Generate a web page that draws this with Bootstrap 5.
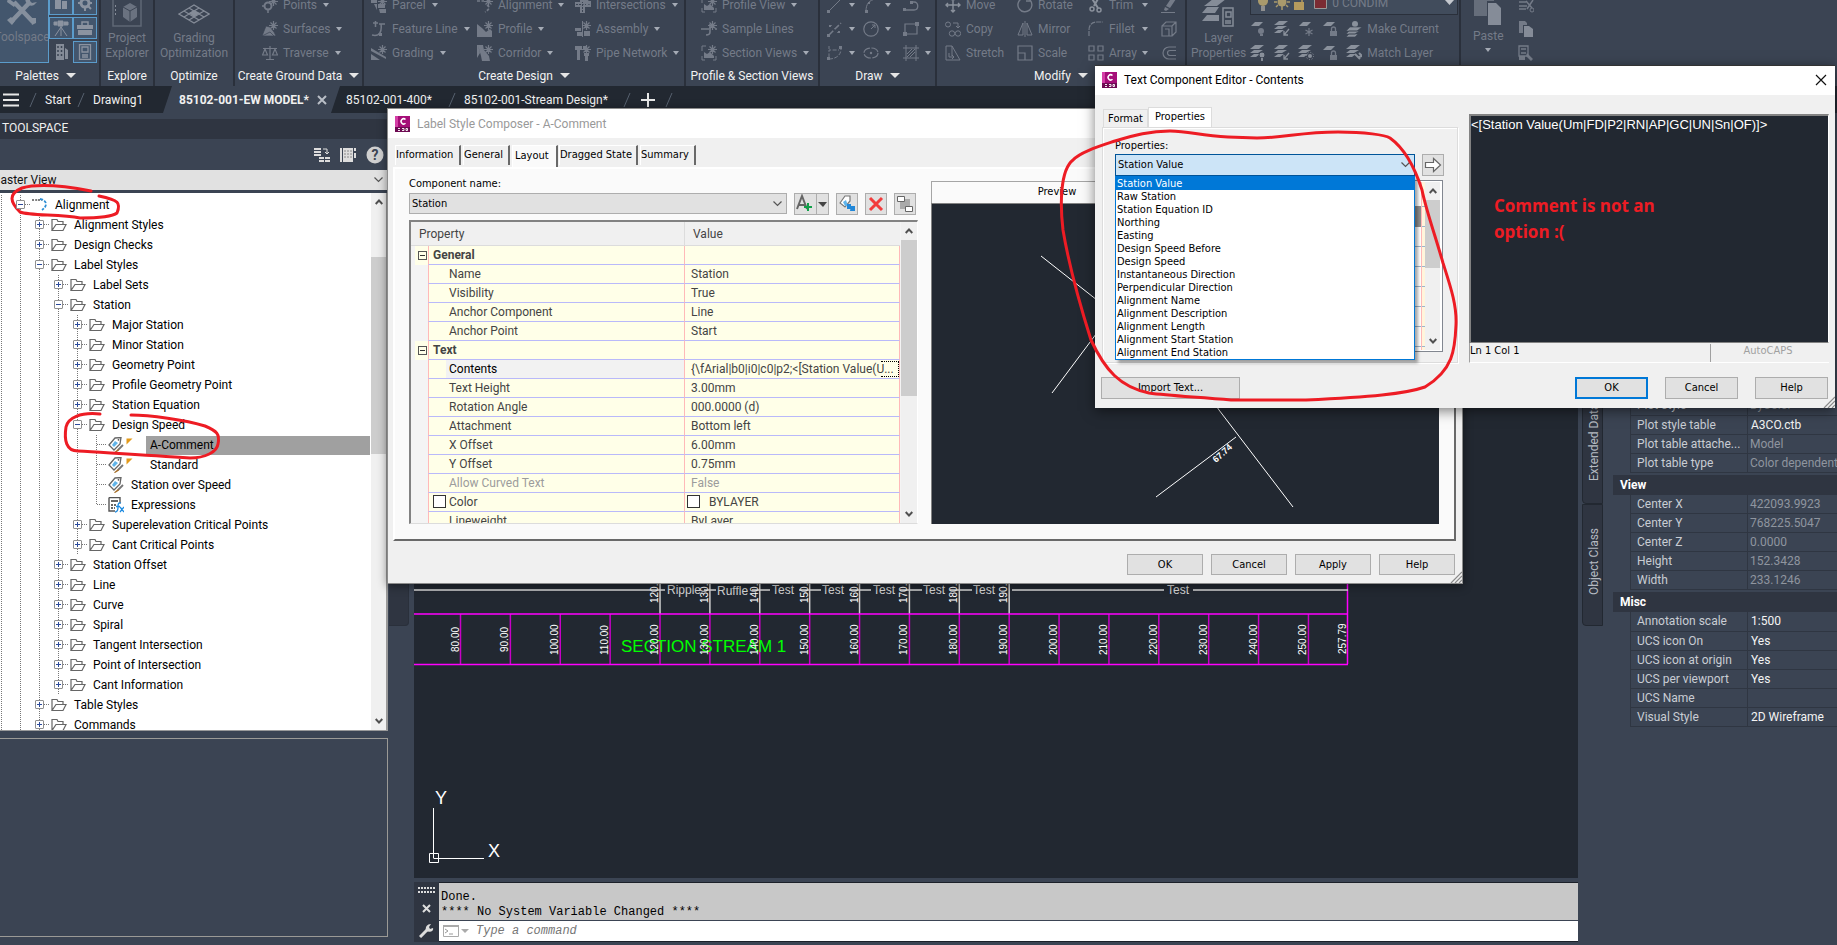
<!DOCTYPE html>
<html lang="en">
<head>
<meta charset="utf-8">
<meta name="viewport" content="width=device-width, initial-scale=1">
<title>Civil 3D - Label Style Composer</title>
<link href="https://cdn.jsdelivr.net/npm/bootstrap@5.3.0/dist/css/bootstrap.min.css" rel="stylesheet">
<style>
:root{--panel:#3b4453;--deep:#2f3541;--ink:#222831;--line:#2a303b;--dim:#747b88;--ui:Roboto,"Open Sans",sans-serif;--dlg:"DejaVu Sans Condensed","Noto Sans",sans-serif}
body{height:100vh;overflow:hidden;background:var(--panel);font:12px/16px var(--ui);color:#f0f0f0;display:flex;flex-direction:column;position:relative}
button,select,input,textarea{font:inherit;color:inherit;border:0;border-radius:0;background:none;padding:0;margin:0}
svg{flex:none;display:block}
.ic{width:16px;height:16px}
/* ribbon */
.ribbon{height:86px;overflow:hidden;color:var(--dim)}
.rpanel{border-right:2px solid var(--line);display:flex;flex-direction:column;flex:none}
.rpanel:last-child{border:0;flex:1}
.rbody{height:65px;overflow:hidden;display:flex;align-items:flex-end}
.rtitle{height:21px;color:#f2f2f2;display:flex;align-items:center;justify-content:center;gap:7px;white-space:nowrap}
.car{width:0;height:0;border:3px solid transparent;border-top:4px solid #a5abb5;border-bottom:0;flex:none}
.rtitle .car{border-width:5px 5px 0;border-top-color:#e6e6e6}
.rgrid{display:grid;grid-auto-rows:24px}
.rgrid button{display:flex;align-items:center;gap:5px;white-space:nowrap;text-align:left}
.rgrid .car{margin-left:1px}
.g1{margin-left:27px}
.g3{margin-left:7px;grid-template-columns:106px 98px 100px}
.g4{margin-left:15px}
.g5{margin-left:7px;grid-template-columns:36px 40px 32px}
.g6{margin-left:8px;grid-template-columns:72px 71px 73px 22px}
.g6 .car{margin-left:auto;margin-right:13px}
.glay{grid-template-columns:24px 24px 24px 24px auto}
.big{height:64px;display:flex;flex-direction:column;align-items:center;justify-content:flex-end;line-height:15px;padding-bottom:4px;gap:4px;flex:none}
.tsp{width:53px;height:63px;margin-left:-4px;align-self:flex-start;background:#43566d;border:1px solid #5b9ccb;border-width:0 1px 1px 0;padding-bottom:17px;overflow:hidden}
.tog{display:grid;grid-template-columns:24px 24px;grid-auto-rows:22px;gap:2px 0;padding-bottom:2px}
.tog button{display:flex;align-items:center;justify-content:center}
.tog .on{background:#43566d;border:1px solid #5b9ccb}
.laysel{width:208px;height:24px;background:#414c5c;border:1px solid var(--line);display:flex;align-items:center;gap:4px;padding:0 3px 0 5px;margin-bottom:2px}
.laysel select{flex:1;appearance:none}
/* drawing tabs */
.docs{height:27px;background:var(--ink);display:flex;align-items:stretch;flex:none}
.docs button{padding:1px 6px 0;white-space:nowrap;text-align:left;flex:none}
.docs .sl{width:12px;flex:none}
.docs .dactive{background:var(--panel);clip-path:polygon(9px 0,100% 0,calc(100% - 9px) 100%,0 100%);width:177px;padding-left:16px;font-weight:700;display:flex;align-items:center;gap:8px}
/* toolspace */
.space{width:388px;flex:none;display:flex;flex-direction:column;padding:6px 0 8px}
.tshead{height:20px;background:var(--deep);padding:1px 2px}
.tsbar{height:31px;display:flex;align-items:center;justify-content:flex-end;gap:10px;padding-right:4px}
.mview{position:relative;height:20px;margin-bottom:3px}
.mview select{appearance:none;width:100%;height:20px;background:#e1e1e1;color:#111;text-indent:-10px}
.chev{position:absolute;right:5px;top:50%;margin-top:-3px;pointer-events:none}
.treebox{flex:1;min-height:0;background:#fff;color:#000;display:flex;overflow:hidden;border-right:2px solid #9a9a9a;border-bottom:1px solid #9a9a9a}
.tree{flex:1;list-style:none;margin:2px 1px 0 -8px;padding:0;min-width:0}
.tree li{height:20px;display:flex;align-items:center}
.gd{width:19px;height:20px;flex:none;position:relative;background:repeating-linear-gradient(#777 0 1px,transparent 1px 2px) 9px 0/1px 100% no-repeat}
.gd.nd{background-size:1px 10px}
.gd.hz::after{content:"";position:absolute;left:10px;top:9px;width:9px;height:1px;background:repeating-linear-gradient(90deg,#777 0 1px,transparent 1px 2px)}
.gd button{position:absolute;left:5px;top:5px;width:9px;height:9px;border:1px solid #8f8f8f;background:linear-gradient(#2b4a9b,#2b4a9b) center/5px 1px no-repeat,#fff;z-index:1;border-radius:1px}
.gd button.pl{background:linear-gradient(#2b4a9b,#2b4a9b) center/5px 1px no-repeat,linear-gradient(#2b4a9b,#2b4a9b) center/1px 5px no-repeat,#fff}
.tree .ti{margin-left:2px}
.tree .tx{margin-left:7px;white-space:nowrap}
.tree .sel{flex:1;background:#a0a0a0;height:19px;line-height:19px;margin-left:3px;padding-left:4px}
.sb{width:15px;background:#f0f0f0;flex:none;display:flex;flex-direction:column;align-items:center}
.sb i{display:block;width:100%;background:#cdcdcd}
.sb svg{margin:6px 0}
.tpre{height:199px;margin-top:7px;border:1px solid #9b9a96;border-left:0;flex:none}
/* drawing area */
.gut{width:26px;flex:none;padding-left:1px}
.gut div{width:20px;height:513px;background:var(--deep);border:1px solid var(--line);border-left:0;border-radius:0 0 4px 0}
.draw{flex:1;min-width:0;display:flex;flex-direction:column}
.canvas{flex:1;min-height:0;background:var(--ink);overflow:hidden}
.canvas text,.pv text{font-family:"Liberation Sans",Arial,sans-serif}
.cmd{height:60px;margin:4px 0 3px;display:flex;flex:none}
.cgrip{width:25px;background:var(--deep);display:flex;flex-direction:column;align-items:center;justify-content:space-between;padding:5px 0 4px;flex:none}
.clog{height:38px;background:#c8c8c8;color:#000;padding:7px 2px 1px;font:12px/15px "Liberation Mono",monospace;border-top:1px solid #1b2029}
.cin{height:21px;margin-top:1px;background:#fff;display:flex;align-items:center;padding-left:4px;border-bottom:1px solid #1b2029}
.cin input{flex:1;margin-left:7px;font:italic 12px "Liberation Mono",monospace;color:#222;outline:0}
.cin input::placeholder{color:#777;opacity:1}
/* properties */
.props{width:259px;flex:none;display:flex;overflow:hidden}
.vtabs{padding:271px 10px 0 4px;display:flex;flex-direction:column}
.vtabs button{width:21px;height:120px;line-height:18px;writing-mode:vertical-rl;transform:rotate(180deg);background:var(--deep);border:1px solid #222831;color:#b5bac2;border-radius:0 4px 0 0;text-align:left;padding:22px 2px 0 0}
.vtabs button+button{height:122px;padding-top:30px}
.pg{flex:1;padding-top:283px;min-width:0;overflow:hidden}
.pg table{margin:0 0 2px 17px;width:240px;table-layout:fixed;border-collapse:collapse;color:#c9cdd3}
.pg td{height:19px;padding:0 0 0 6px;border:1px solid #2f3642;border-width:0 0 1px 1px;line-height:18px;white-space:nowrap;overflow:hidden}
.pg td:first-child{width:117px}
.pg td.w{color:#f4f4f4;padding-left:3px}
.pg td.d{color:#8f959f;padding-left:2px}
.pg h2{margin:0;height:20px;font:700 12px/20px var(--ui);background:var(--deep);padding-left:7px;color:#fff}
/* dialogs */
.dlgw{position:absolute;background:#f0f0f0;color:#000;font:11px/14px var(--dlg);display:flex;flex-direction:column}
.dtitle{height:29px;background:#fff;display:flex;align-items:center;gap:7px;padding:0 8px 0 7px;font:12px/16px var(--ui);flex:none}
.dtitle span{flex:1}
.b3{height:21px;background:#e1e1e1;border:1px solid #adadad;text-align:center;flex:none}
.ib{width:22px;height:22px;background:#e1e1e1;border:1px solid #adadad;display:flex;align-items:center;justify-content:center;flex:none}
.lsc{left:387px;top:108px;width:1076px;height:476px;border:1px solid #8c8c8c;box-shadow:0 2px 9px rgba(0,0,0,.45)}
.lsc .dtitle{color:#999}
.ltabs{display:flex;align-items:flex-end;padding:7px 0 0 7px;gap:2px;height:29px;flex:none}
.ltabs button{height:20px;border-top:1px solid #fff;border-left:1px solid #fff;border-right:2px solid #696969;margin-bottom:2px;white-space:nowrap;padding:0 0 1px;text-align:left}
.ltabs .act{height:22px;margin-bottom:0;padding-left:2px;background:#fafafa}
.lpane{margin:0 6px 0 5px;height:374px;background:#fafafa;border:2px solid #fff;border-right:2px solid #696969;border-bottom:2px solid #696969;display:flex;padding:8px 14px 16px 14px;gap:13px}
.cbx{position:relative}
.cbx select{appearance:none;width:100%;height:21px;background:#e1e1e1;border:1px solid #adadad;padding-left:2px;text-align:left}
.lfoot{display:flex;justify-content:flex-end;gap:8px;padding:13px 7px 0 0}
.lfoot .b3{width:76px}
.grid{width:509px;height:304px;border:2px solid #828282;border-right:1px solid #fff;border-bottom:1px solid #dcdcdc;display:flex;background:#f4f4f4;overflow:hidden;margin-top:5px}
.grid table{width:489px;table-layout:fixed;border-collapse:separate;border-spacing:0;font:12px/16px var(--ui);color:#444;flex:none;align-self:flex-start}
.grid th{height:24px;background:#f0f0f0;font-weight:400;border-bottom:1px solid #dcdcdc;padding:0 0 0 8px}
.grid th+th{border-left:1px solid #dcdcdc}
.grid td{height:19px;line-height:17px;background:#ffffe8;border-bottom:1px solid #b9b9fa;white-space:nowrap;padding:0;overflow:hidden}
.grid td.gt{width:17px;background:#f4f4f4;border:0}
.grid td.nm{border-left:1px solid #ffb9b9;padding-left:20px}
.grid td.vl{border-left:1px solid #ffb9b9;border-right:1px solid #ffb9b9;padding-left:6px}
.grid tr.cat td.gt{background:linear-gradient(90deg,#f4f4f4 4px,#ffffe8 4px)}
.grid tr.cat td.nm{font-weight:700;padding-left:4px}
.ebox{display:block;width:9px;height:9px;border:1px solid #555;background:linear-gradient(#333,#333) center/5px 1px no-repeat;margin:0 1px 0 auto}
.grid tr.off{color:#9c9c9c}
.grid tr.cur td.nm{background:linear-gradient(90deg,#ffffe8 17px,#f2f2f2 17px);color:#000}
.grid tr.cur td.vl>div{position:relative}
.dotb{position:absolute;right:0;top:0;width:18px;height:16px;border:1px dotted #000;border-left:0}
.sw{display:inline-block;width:13px;height:13px;border:1px solid #333;background:#fff;vertical-align:-2px}
.pvh{width:252px;height:22px;border:1px solid #a5a5a5;border-bottom:0;background:#fafafa;text-align:center;line-height:20px}
.pv{width:508px;height:321px;background:var(--ink);border-left:1px solid #828282;border-top:1px solid #828282;overflow:hidden}
.tce{left:1095px;top:65px;width:740px;height:343px;border-top:1px solid #333;box-shadow:0 3px 12px rgba(0,0,0,.5)}
.tce .dtitle{padding-bottom:1px}
.ftabs{display:flex;align-items:flex-end;padding-left:8px;height:32px;flex:none}
.ftabs button{height:18px;width:45px;border:1px solid #dcdcdc;border-bottom:0;background:#f0f0f0}
.ftabs .act{height:21px;width:64px;background:#fff;margin-bottom:-1px;padding-bottom:2px}
.fpane{width:356px;height:236px;margin-left:7px;border:1px solid #dcdcdc;padding:11px 12px 0;position:relative;box-shadow:inset 1px 1px 0 #fff,1px 1px 0 #fff}
.tce .cbx select{background:#cce4f7;border-color:#005499;height:22px}
.ftab{height:172px;border:1px solid #828790;background:#fff;margin-top:4px;width:328px;display:flex;justify-content:flex-end;padding:1px 2px}
.rl{width:30px;background:linear-gradient(#8f8f8f,#8f8f8f) 0 24px/26px 21px no-repeat,linear-gradient(#ffb9b9,#ffb9b9) 26px 0/1px 100% no-repeat,repeating-linear-gradient(transparent 0 19px,#9db6cc 19px 20px) 0 5px,linear-gradient(90deg,#fff 27px,#fff5dc 27px)}
.drop{position:absolute;left:12px;top:48px;width:300px;height:184px;background:#fff;border:1px solid #0078d7;box-shadow:3px 3px 3px rgba(0,0,0,.35);list-style:none;margin:0;padding:0;line-height:13px}
.drop li{padding-left:1px;height:13px}
.drop li:first-child{background:#0078d7;color:#fff}
.ed{width:360px;margin:-13px 0 0 11px}
.ed textarea{display:block;width:360px;height:229px;padding-top:1px;background:var(--ink);color:#fff;resize:none;outline:0;border:2px solid #828282;border-right:1px solid #fff;border-bottom:1px solid #828282;font:13px/16px "Liberation Sans",Arial,sans-serif;overflow:hidden}
.stat{display:flex;height:20px;border-bottom:1px solid #fff;border-left:1px solid #a0a0a0;padding-top:1px}
.stat div:first-child{flex:1}
.stat div:last-child{width:119px;border-left:1px solid #a0a0a0;padding-right:4px;text-align:center;color:#a0a0a0}
.ffoot{display:flex;gap:17px;padding:0 7px 0 6px;margin-top:14px}
.ffoot .b3{width:73px;height:22px}
.ffoot .imp{width:139px;margin-right:auto}
.ffoot .ok{border:2px solid #0078d7}
.grip{position:absolute;right:0;bottom:0}
.ann{position:absolute;left:0;top:0;pointer-events:none}
.note{position:absolute;left:1494px;top:193px;font:700 17px/26px "Open Sans","Noto Sans",sans-serif;color:#ed1c24;margin:0}
</style>
</head>
<body>

<svg width="0" height="0" class="position-absolute" aria-hidden="true">
<defs>
<symbol id="star" viewBox="0 0 16 16"><path d="M11.500 0v9M7 4.500h9M8.500 1.500l6 6M14.500 1.500l-6 6" stroke="#747b88" stroke-width="1.200"/></symbol>
<symbol id="i-pt" viewBox="0 0 16 16"><circle cx="6" cy="9" r="3.500" fill="none" stroke="#747b88" stroke-width="2"/><path d="M6 12v4M0 9h3"  stroke="#747b88" stroke-width="1.500"/><use href="#star"/></symbol>
<symbol id="i-surf" viewBox="0 0 16 16"><path d="M0 15 4 5l4 1 4 5 2 4zM0 15l8-4 4 4" fill="#747b88" stroke="#3b4453" stroke-width=".7"/><use href="#star"/></symbol>
<symbol id="i-trav" viewBox="0 0 16 16" ><path d="M8 1v13M4 14.500h8M1 3.500h14M3 4l-2.500 6h5zM13 4l-2.500 6h5z" fill="none" stroke="#747b88" stroke-width="1.200"/></symbol>
<symbol id="i-parc" viewBox="0 0 16 16"><path d="M0 1h6v5H0zM7 7h7v4H7zM3 7h3v6zM8 12h7v4H9z" fill="#747b88"/><use href="#star"/></symbol>
<symbol id="i-feat" viewBox="0 0 16 16"><path d="M1 14c8 2 10-4 9-11M8 3h6M2 2h5M4.500 0v6" fill="none" stroke="#747b88" stroke-width="1.500"/><path d="M8 12h3v3H8z" fill="#747b88"/></symbol>
<symbol id="i-grade" viewBox="0 0 16 16"><path d="M0 3l15 9v2L0 6zM0 9l9 6H0z" fill="#747b88"/><use href="#star"/></symbol>
<symbol id="i-align" viewBox="0 0 16 16"><path d="M0 4h7M10 8c3 2 3 4-2 7" fill="none" stroke="#747b88" stroke-width="1.600" stroke-dasharray="3 1.500"/><use href="#star"/></symbol>
<symbol id="i-prof" viewBox="0 0 16 16"><path d="M0 3l5 4 4 4 4-3 2 2v6H0zM1 0v4" fill="#747b88"/><use href="#star"/></symbol>
<symbol id="i-corr" viewBox="0 0 16 16"><path d="M1 0h5l1 5 5 6 1 5H5l-1-5zM0 0h1l2 8-3 5z" fill="#747b88"/><use href="#star"/></symbol>
<symbol id="i-int" viewBox="0 0 16 16"><path d="M5 0h5v5h6v5h-6v6H5v-6H0V5h5z" fill="#747b88"/><path d="M7.500 1v14M1 7.500h14" stroke="#3b4453" stroke-dasharray="2 1"/><use href="#star"/></symbol>
<symbol id="i-asm" viewBox="0 0 16 16"><path d="M0 7h6v3H0zM2 11h5v4H2zM9 10h6v5H9zM7 0h1v16H7z" fill="#747b88"/><use href="#star"/></symbol>
<symbol id="i-pipe" viewBox="0 0 16 16"><path d="M0 1h7v4H5v10H2V5H0zM8 1h3v3H8zM9 8h5v3h-1v5h-3v-5H9z" fill="#747b88"/><use href="#star"/></symbol>
<symbol id="i-pv" viewBox="0 0 16 16"><path d="M1 6V1h4M15 11v4h-3M1 11v4h3" fill="none" stroke="#747b88"/><path d="M3 13V7l3 2 3-2 4 4v2z" fill="#747b88"/><use href="#star"/></symbol>
<symbol id="i-sl" viewBox="0 0 16 16"><path d="M0 8h8M14 8h2M9 3v8c0 3-2 3-4 3" fill="none" stroke="#747b88" stroke-width="1.600"/><use href="#star"/></symbol>
<symbol id="i-line" viewBox="0 0 16 16"><path d="M2 14 14 2" stroke="#747b88"/><path d="M0 13h3v3H0zM13 0h3v3h-3z" fill="#747b88"/></symbol>
<symbol id="i-dash" viewBox="0 0 16 16"><path d="M2 14 14 2M4 4v1M8 7v1M11 11v1" stroke="#747b88" stroke-width="1.500" stroke-dasharray="6 2"/><path d="M2 4h2v2H2zM11 10h2v2h-2zM0 13h3v3H0z" fill="#747b88"/></symbol>
<symbol id="i-arc1" viewBox="0 0 16 16"><path d="M2 1v3M14 1v3c0 6-5 10-12 10V5h10" fill="none" stroke="#747b88" stroke-dasharray="4 1.500"/><path d="M0 12h3v3H0zM12 1h3v3h-3z" fill="#747b88"/></symbol>
<symbol id="i-arc" viewBox="0 0 16 16"><path d="M3 14C3 7 6 3 13 2" fill="none" stroke="#747b88"/><path d="M2 13h3v3H2zM12 0h3v3h-3zM5 5h2v2H5z" fill="#747b88"/></symbol>
<symbol id="i-circ" viewBox="0 0 16 16"><circle cx="8" cy="8" r="7.200" fill="none" stroke="#747b88" stroke-width="1.200"/><path d="M8 8l4-4M9 4h3v3" fill="none" stroke="#747b88"/></symbol>
<symbol id="i-ell" viewBox="0 0 16 16"><ellipse cx="8" cy="8" rx="7" ry="5" fill="none" stroke="#747b88" stroke-width="1.200" stroke-dasharray="8 1.500"/><circle cx="8" cy="8" r="1.200" fill="#747b88"/></symbol>
<symbol id="i-pl" viewBox="0 0 16 16"><path d="M1 13h10c5 0 5-8 0-8H9" fill="none" stroke="#747b88" stroke-width="1.300"/><path d="M0 11h3v3H0zM7 4h3v3H7z" fill="#747b88"/></symbol>
<symbol id="i-rect" viewBox="0 0 16 16"><path d="M2 3h12v10H2z" fill="none" stroke="#747b88" stroke-width="1.200"/><path d="M0 11h4v4H0zM12 1h4v4h-4z" fill="#747b88"/></symbol>
<symbol id="i-hat" viewBox="0 0 16 16"><path d="M3 0v16M13 0v16M0 3h16M0 13h16M4 9l5-5M4 12l8-8M7 12l5-5" fill="none" stroke="#747b88"/></symbol>
<symbol id="i-move" viewBox="0 0 16 16"><path d="M8 1v14M1 8h14M6 3l2-2 2 2M6 13l2 2 2-2M3 6 1 8l2 2M13 6l2 2-2 2" fill="none" stroke="#8a919c" stroke-width="1.400"/></symbol>
<symbol id="i-copy" viewBox="0 0 16 16"><circle cx="3" cy="3.500" r="2.500" fill="none" stroke="#747b88"/><circle cx="7" cy="12.500" r="2.700" fill="none" stroke="#747b88"/><circle cx="13" cy="12.500" r="2.700" fill="none" stroke="#747b88"/><path d="M8 2h5v5M11 5l2 2 2-2" fill="none" stroke="#747b88"/></symbol>
<symbol id="i-str" viewBox="0 0 16 16"><path d="M1 1h6l8 14H1zM7 1v10M4 8v4h5M7 10l2 2-2 2" fill="none" stroke="#747b88"/></symbol>
<symbol id="i-rot" viewBox="0 0 16 16"><path d="M4 2a7 7 0 1 0 9 1M13 0v4H9" fill="none" stroke="#747b88" stroke-width="1.400"/></symbol>
<symbol id="i-mir" viewBox="0 0 16 16"><path d="M6 2v12H1zM10 2v12h5zM8 0v16" fill="none" stroke="#747b88"/></symbol>
<symbol id="i-scl" viewBox="0 0 16 16"><path d="M1 1h14v14H1zM1 8h7v7" fill="none" stroke="#747b88" stroke-width="1.200"/></symbol>
<symbol id="i-trim" viewBox="0 0 16 16"><path d="M3 0l7 11M11 0 6 9" stroke="#8a919c" stroke-width="2"/><circle cx="4" cy="12" r="2" fill="none" stroke="#8a919c" stroke-width="1.500"/><circle cx="11" cy="13" r="2" fill="none" stroke="#8a919c" stroke-width="1.500"/></symbol>
<symbol id="i-fil" viewBox="0 0 16 16"><path d="M1 15V9c0-5 3-8 8-8h6" fill="none" stroke="#747b88" stroke-width="1.200" stroke-dasharray="5 1"/></symbol>
<symbol id="i-arr" viewBox="0 0 16 16"><path d="M1 1h5v5H1zM10 1h5v5h-5zM1 10h5v5H1zM10 10h5v5h-5z" fill="none" stroke="#747b88" stroke-width="1.200"/></symbol>
<symbol id="i-ers" viewBox="0 0 16 16"><path d="M5 9 11 0l4 2-6 9zM4 10l4 2-3 2-2-1z" fill="#747b88"/><path d="M0 15.500h14" stroke="#747b88"/></symbol>
<symbol id="i-cube" viewBox="0 0 16 16"><path d="M1 5h10v10H1zM1 5l4-4h10v10l-4 4M11 5l4-4M4 8h4v7" fill="none" stroke="#747b88" stroke-width="1.200"/></symbol>
<symbol id="i-off" viewBox="0 0 16 16"><path d="M15 2H8a6 6 0 0 0 0 12h7M15 5.500H9a2.500 2.500 0 0 0 0 5h6" fill="none" stroke="#747b88" stroke-width="1.200"/></symbol>
<symbol id="i-ly1" viewBox="0 0 16 16"><path d="M5 1h8L9 5H1z" fill="#8a919c"/><circle cx="11" cy="10" r="3" fill="#747b88"/><path d="M10 13h3v2h-3z" fill="#747b88"/></symbol>
<symbol id="i-ly2" viewBox="0 0 16 16"><path d="M5 0h9L9 4H0zM4 5h9L8 8H0zM4 9h6l-4 3H0z" fill="#8a919c"/><path d="M15 8l-5 6M10 10v4h4" stroke="#8a919c" fill="none" stroke-width="1.300"/></symbol>
<symbol id="i-ly3" viewBox="0 0 16 16"><path d="M5 1h8L9 5H1z" fill="#8a919c"/><path d="M11 7v8M7.500 9l7 4M14.500 9l-7 4" stroke="#747b88" stroke-width="1.200"/></symbol>
<symbol id="i-ly4" viewBox="0 0 16 16"><path d="M5 1h8L9 5H1z" fill="#8a919c"/><path d="M8 10h7v5H8z" fill="#747b88"/><path d="M9.500 10V8a2 2 0 0 1 4 0v2" fill="none" stroke="#747b88" stroke-width="1.300"/></symbol>
<symbol id="i-ly5" viewBox="0 0 16 16"><circle cx="9" cy="3" r="3" fill="#8a919c"/><path d="M4 6h12l-5 4H0zM3 10h10l-4 3H0zM3 13h9l-3 3H0z" fill="#8a919c" stroke="#3b4453" stroke-width=".6"/></symbol>
<symbol id="i-ly6" viewBox="0 0 16 16"><path d="M5 0h9L9 4H0zM4 5h9L8 8H0zM4 9h6l-4 3H0z" fill="#8a919c"/><circle cx="12" cy="10" r="3" fill="#8a919c" stroke="#3b4453"/><path d="M11 13h2v3h-2z" fill="#8a919c"/></symbol>
<symbol id="i-ly7" viewBox="0 0 16 16"><path d="M5 0h9L9 4H0zM4 5h9L8 8H0zM4 9h6l-4 3H0z" fill="#8a919c"/><circle cx="12" cy="11" r="2" fill="#8a919c"/><circle cx="12" cy="11" r="3.600" fill="none" stroke="#8a919c" stroke-dasharray="1 1.800"/></symbol>
<symbol id="i-ly8" viewBox="0 0 16 16"><path d="M5 0h9L9 4H0zM4 5h9L8 8H0zM4 9h6l-4 3H0z" fill="#8a919c"/><path d="M9 9l5 5M13 8l3 3-3 1" stroke="#8a919c" stroke-width="2" fill="none"/></symbol>
<symbol id="i-cut" viewBox="0 0 16 16"><path d="M1 2h8M1 5h7M1 9h8M1 12h7" stroke="#747b88" stroke-width="1.500"/><path d="M15 3 9 12M8 4l6 7" stroke="#747b88" stroke-width="1.500"/><circle cx="14" cy="13" r="2" fill="none" stroke="#747b88"/></symbol>
<symbol id="i-cpy" viewBox="0 0 16 16"><path d="M1 0h6l2 2v2H5v8H1z" fill="#747b88"/><path d="M6 5h5l4 3v8H6z" fill="#858c98"/></symbol>
<symbol id="i-pst" viewBox="0 0 16 16"><path d="M1 1h9v10H1zM3 4h5M3 8h5" fill="none" stroke="#747b88" stroke-width="1.300"/><path d="M1 11h6v4H1zM9 8l6 6-2 2-5-5z" fill="#747b88"/></symbol>
<symbol id="fold" viewBox="0 0 16 14"><path d="M1 12.500V1.500h5l1 2h5v3M1 12.500l4-6h10l-3 6z" fill="#fff" stroke="#666" stroke-width="1.200"/></symbol>
<symbol id="aln" viewBox="0 0 16 14"><path d="M0 2h6M6 2h4" stroke="#555" stroke-width="1.500" stroke-dasharray="2 1.200" fill="none"/><path d="M8 1c7 1 8 7 2 11" fill="none" stroke="#2a8dd4" stroke-width="1.800" stroke-dasharray="3 1.500"/></symbol>
<symbol id="tag" viewBox="0 0 16 16"><path d="M1 8 7 1l6-.500L12 7l-6 6z" fill="#fff" stroke="#666" stroke-width="1.300"/><path d="M4 8l3-4 3 2-4 4z" fill="#5fb4ea"/><circle cx="10.500" cy="2.800" r=".9" fill="#555"/><path d="M15 8l-5 5" stroke="#777" stroke-width="1.800"/><path d="M10 12l1 1.500L7 16l-1-.500z" fill="#a46a22"/></symbol>
<symbol id="expr" viewBox="0 0 16 16"><path d="M1 .500h11v6M1 .500V14h6" fill="none" stroke="#555" stroke-width="1.400"/><path d="M3 3h7v2H3zM3 7h2v2H3zM6 7h2v2H6zM3 10h2v2H3zM6 10h1v2H6z" fill="#666"/><path d="M13 6c-3-1-3 2-3 4s0 5-3 5M8 9.500h4M12 10l4 5M16 10l-4 5" fill="none" stroke="#1c8ae0" stroke-width="1.300"/></symbol>
<symbol id="c3d" viewBox="0 0 15 16"><path d="M0 0h15v16H0z" fill="#a50e78"/><path d="M0 0h3v11H0z" fill="#d43fa6"/><path d="M0 11h15v5H0z" fill="#6d0a52"/><path d="M10.500 3.500A2.600 2.600 0 1 0 10.500 7.300" fill="none" stroke="#fff" stroke-width="1.500"/><path d="M3 12.500h2M3 14.500h2M7 12.500h2v2H7M11 12.500h1.500v2H11z" stroke="#fff" fill="none" stroke-width=".9"/></symbol>
<symbol id="dn" viewBox="0 0 9 6"><path d="M.5.500 4.500 4.500 8.500.500" fill="none" stroke="#555" stroke-width="1.200"/></symbol>
<symbol id="sup" viewBox="0 0 8 6"><path d="M.7 5 4 1.500 7.300 5" fill="none" stroke="#505050" stroke-width="1.900"/></symbol>
<symbol id="sdn" viewBox="0 0 8 6"><path d="M.7 1 4 4.500 7.300 1" fill="none" stroke="#505050" stroke-width="1.900"/></symbol>
<symbol id="rs" viewBox="0 0 12 12"><path d="M1 12 12 1M5 12l7-7M9 12l3-3" stroke="#8a8a8a" stroke-width="1.200"/></symbol>
</defs>
</svg>

<header class="ribbon d-flex flex-shrink-0">
  <section class="rpanel" style="width:101px">
    <div class="rbody">
      <button class="big tsp"><svg width="32" height="32" viewBox="0 0 32 32"><path d="M5 28 24 8M27 28 8 8" stroke="#858f9d" stroke-width="4.500"/><path d="M20 3a6 6 0 0 0 8 8l3-3-5 1-2-2 1-5zM2 4l8 6-2 3-7-5zM1 26l5 5 3-4-4-4zM24 24l6 0 0 5-4 2z" fill="#858f9d"/></svg><span>Toolspace</span></button>
      <div class="tog">
        <button class="on" aria-label="Sheets"><svg class="ic"><path d="M2 2h6v11H2zM9 5h5v8H9z" fill="#8b93a0"/></svg></button>
        <button class="on" aria-label="Settings"><svg class="ic"><circle cx="8" cy="7" r="4" fill="none" stroke="#8b93a0" stroke-width="3"/><path d="M8 0v3M8 11v4M1 7h3M12 7h3M3 2l2 2M11 10l3 3" stroke="#8b93a0" stroke-width="2"/></svg></button>
        <button class="on" aria-label="Survey"><svg class="ic"><path d="M1 2h3v3H1zM5 1h5v5H5zM11 2h4v3h-4zM8 6v10M8 7l-6 9M8 7l6 9" fill="#8b93a0" stroke="#8b93a0"/></svg></button>
        <button class="on" aria-label="Toolbox"><svg class="ic"><path d="M0 5h16v4H0zM1 10h14v5H1z" fill="#8b93a0"/><path d="M5 5V2h6v3" fill="none" stroke="#8b93a0" stroke-width="1.500"/></svg></button>
        <button aria-label="Building"><svg class="ic"><path d="M3 0h8v16H3zM12 4l3 2v9h-3z" fill="#858c98"/><path d="M5 2v12M8.500 2v12" stroke="#3b4453" stroke-width="1.500" stroke-dasharray="2 2"/></svg></button>
        <button class="on" aria-label="Properties"><svg class="ic"><path d="M2.500.500h11v15h-11zM5 3h6v5H5zM5 11h6M5 13h6" fill="none" stroke="#8b93a0" stroke-width="1.300"/></svg></button>
      </div>
    </div>
    <div class="rtitle pe-2">Palettes <i class="car"></i></div>
  </section>
  <section class="rpanel" style="width:54px">
    <div class="rbody justify-content-center"><button class="big"><svg width="30" height="30" viewBox="0 0 30 30"><path d="M1 0v29h28V0" fill="none" stroke="#5f6775" stroke-width="1.500"/><path d="M3 9h1M3 13h1M3 17h1" stroke="#858c98" stroke-width="2"/><path d="M18 6l7 4v10l-7 5-7-5V10z" fill="#6a7280"/><path d="M11 10l7 4 7-4M18 14v11" stroke="#3b4453" fill="none"/></svg><span>Project<br>Explorer</span></button></div>
    <div class="rtitle">Explore</div>
  </section>
  <section class="rpanel" style="width:80px">
    <div class="rbody justify-content-center"><button class="big" style="gap:7px"><svg width="32" height="20" viewBox="0 0 32 20"><path d="M1 10 16 1l15 9-15 9zM6 13l15-9M11 16l15-9M11 4l15 9M6 7l15 9" fill="none" stroke="#858c98" stroke-width="1.300"/><path d="M11 9l5-3 6 3-6 4z" fill="#858c98"/></svg><span>Grading<br>Optimization</span></button></div>
    <div class="rtitle">Optimize</div>
  </section>
  <section class="rpanel" style="width:129px">
    <div class="rbody"><div class="rgrid g1">
      <button><svg class="ic"><use href="#i-pt"/></svg>Points <i class="car"></i></button>
      <button><svg class="ic"><use href="#i-surf"/></svg>Surfaces <i class="car"></i></button>
      <button><svg class="ic"><use href="#i-trav"/></svg>Traverse <i class="car"></i></button>
    </div></div>
    <div class="rtitle">Create Ground Data <i class="car"></i></div>
  </section>
  <section class="rpanel" style="width:322px">
    <div class="rbody"><div class="rgrid g3">
      <button><svg class="ic"><use href="#i-parc"/></svg>Parcel <i class="car"></i></button>
      <button><svg class="ic"><use href="#i-align"/></svg>Alignment <i class="car"></i></button>
      <button><svg class="ic"><use href="#i-int"/></svg>Intersections <i class="car"></i></button>
      <button><svg class="ic"><use href="#i-feat"/></svg>Feature Line <i class="car"></i></button>
      <button><svg class="ic"><use href="#i-prof"/></svg>Profile <i class="car"></i></button>
      <button><svg class="ic"><use href="#i-asm"/></svg>Assembly <i class="car"></i></button>
      <button><svg class="ic"><use href="#i-grade"/></svg>Grading <i class="car"></i></button>
      <button><svg class="ic"><use href="#i-corr"/></svg>Corridor <i class="car"></i></button>
      <button><svg class="ic"><use href="#i-pipe"/></svg>Pipe Network <i class="car"></i></button>
    </div></div>
    <div class="rtitle">Create Design <i class="car"></i></div>
  </section>
  <section class="rpanel" style="width:134px">
    <div class="rbody"><div class="rgrid g4">
      <button><svg class="ic"><use href="#i-pv"/></svg>Profile View <i class="car"></i></button>
      <button><svg class="ic"><use href="#i-sl"/></svg>Sample Lines</button>
      <button><svg class="ic"><use href="#i-pv"/></svg>Section Views <i class="car"></i></button>
    </div></div>
    <div class="rtitle">Profile &amp; Section Views</div>
  </section>
  <section class="rpanel" style="width:117px">
    <div class="rbody"><div class="rgrid g5">
      <button aria-label="Line"><svg class="ic"><use href="#i-line"/></svg><i class="car"></i></button>
      <button aria-label="Arc"><svg class="ic"><use href="#i-arc"/></svg><i class="car"></i></button>
      <button aria-label="Polyline"><svg class="ic"><use href="#i-pl"/></svg></button>
      <button aria-label="Points"><svg class="ic"><use href="#i-dash"/></svg><i class="car"></i></button>
      <button aria-label="Circle"><svg class="ic"><use href="#i-circ"/></svg><i class="car"></i></button>
      <button aria-label="Rectangle"><svg class="ic"><use href="#i-rect"/></svg><i class="car"></i></button>
      <button aria-label="Curve"><svg class="ic"><use href="#i-arc1"/></svg><i class="car"></i></button>
      <button aria-label="Ellipse"><svg class="ic"><use href="#i-ell"/></svg><i class="car"></i></button>
      <button aria-label="Hatch"><svg class="ic"><use href="#i-hat"/></svg><i class="car"></i></button>
    </div></div>
    <div class="rtitle">Draw <i class="car"></i></div>
  </section>
  <section class="rpanel" style="width:250px">
    <div class="rbody"><div class="rgrid g6">
      <button><svg class="ic"><use href="#i-move"/></svg>Move</button>
      <button><svg class="ic"><use href="#i-rot"/></svg>Rotate</button>
      <button><svg class="ic"><use href="#i-trim"/></svg>Trim <i class="car"></i></button>
      <button aria-label="Erase"><svg class="ic"><use href="#i-ers"/></svg></button>
      <button><svg class="ic"><use href="#i-copy"/></svg>Copy</button>
      <button><svg class="ic"><use href="#i-mir"/></svg>Mirror</button>
      <button><svg class="ic"><use href="#i-fil"/></svg>Fillet <i class="car"></i></button>
      <button aria-label="Explode"><svg class="ic"><use href="#i-cube"/></svg></button>
      <button><svg class="ic"><use href="#i-str"/></svg>Stretch</button>
      <button><svg class="ic"><use href="#i-scl"/></svg>Scale</button>
      <button><svg class="ic"><use href="#i-arr"/></svg>Array <i class="car"></i></button>
      <button aria-label="Offset"><svg class="ic"><use href="#i-off"/></svg></button>
    </div></div>
    <div class="rtitle">Modify <i class="car"></i></div>
  </section>
  <section class="rpanel" style="width:274px">
    <div class="rbody ps-1 gap-1">
      <button class="big"><svg width="34" height="32" viewBox="0 0 34 32"><path d="M11 4h13l-9 7H2zM5 12h12l-4 6H0zM5 20h12v6H0zM11 0h14l-3 3H8z" fill="#858c98"/><path d="M21 13h10v18H21zM24 17h5v5h-5zM23 26h6M23 28h6" fill="#3b4453" stroke="#858c98" stroke-width="1.500"/></svg><span>Layer<br>Properties</span></button>
      <div>
        <div class="laysel"><svg width="72" height="18"><circle cx="7" cy="7" r="5" fill="#a99a6c"/><path d="M5 12h4v5H5z" fill="#8f8f8f"/><circle cx="26" cy="8" r="4.500" fill="#a99a6c"/><path d="M26 1v3M26 12v4M18 8h3M31 8h3M20 3l2 2M32 3l-2 2M20 13l2-2M32 13l-2-2" stroke="#a99a6c" stroke-width="1.500"/><path d="M38 8h10v8H38z" fill="#b59b5e"/><path d="M46 8V4a2.500 2.500 0 0 1 5 0v2" fill="none" stroke="#b59b5e" stroke-width="1.500"/><path d="M58.500 2.500h12v12h-12z" fill="#7b2b33" stroke="#999"/></svg><select aria-label="Layer"><option>0 CONDIM</option></select><svg width="9" height="6"><path d="M0 0h9L4.500 5z" fill="#c4c8ce"/></svg></div>
        <div class="rgrid glay">
          <button aria-label="Off"><svg class="ic"><use href="#i-ly1"/></svg></button>
          <button aria-label="Isolate"><svg class="ic"><use href="#i-ly2"/></svg></button>
          <button aria-label="Freeze"><svg class="ic"><use href="#i-ly3"/></svg></button>
          <button aria-label="Lock"><svg class="ic"><use href="#i-ly4"/></svg></button>
          <button><svg class="ic"><use href="#i-ly5"/></svg>Make Current</button>
          <button aria-label="On"><svg class="ic"><use href="#i-ly6"/></svg></button>
          <button aria-label="Unisolate"><svg class="ic"><use href="#i-ly2"/></svg></button>
          <button aria-label="Thaw"><svg class="ic"><use href="#i-ly7"/></svg></button>
          <button aria-label="Unlock"><svg class="ic"><use href="#i-ly4"/></svg></button>
          <button><svg class="ic"><use href="#i-ly8"/></svg>Match Layer</button>
        </div>
      </div>
    </div>
  </section>
  <section class="rpanel">
    <div class="rbody ps-2 gap-3">
      <button class="big ms-1" style="padding-bottom:13px"><svg width="28" height="32" viewBox="0 0 28 32"><path d="M0 0h20v8h-7v15H0z" fill="#666e7b"/><path d="M14 10h8l5 5v17H14z" fill="#858c98"/></svg><span>Paste</span><i class="car"></i></button>
      <div class="rgrid" style="margin-left:-2px">
        <button aria-label="Cut"><svg class="ic"><use href="#i-cut"/></svg></button>
        <button aria-label="Copy"><svg class="ic"><use href="#i-cpy"/></svg></button>
        <button aria-label="Paste special"><svg class="ic"><use href="#i-pst"/></svg></button>
      </div>
    </div>
  </section>
</header>

<nav class="docs" aria-label="Drawings">
  <button style="width:27px;padding-left:3px" aria-label="Menu"><svg width="16" height="14"><path d="M0 1.500h16M0 7h16M0 12.500h16" stroke="#e8e8e8" stroke-width="2"/></svg></button>
  <svg class="sl" height="27"><path d="M3 21 9 7" stroke="#56606e"/></svg>
  <button style="width:36px">Start</button>
  <svg class="sl" height="27"><path d="M3 21 9 7" stroke="#56606e"/></svg>
  <button style="width:76px">Drawing1</button>
  <button class="dactive">85102-001-EW MODEL*<svg width="10" height="10"><path d="M1 1l8 8M9 1 1 9" stroke="#b9bec6" stroke-width="2"/></svg></button>
  <button style="width:106px">85102-001-400*</button>
  <svg class="sl" height="27"><path d="M3 21 9 7" stroke="#56606e"/></svg>
  <button style="width:163px">85102-001-Stream Design*</button>
  <svg class="sl" height="27"><path d="M3 21 9 7" stroke="#56606e"/></svg>
  <button style="width:30px;padding-left:8px" aria-label="New drawing"><svg width="14" height="14"><path d="M7 0v14M0 7h14" stroke="#e8e8e8" stroke-width="2"/></svg></button>
  <svg class="sl" height="27"><path d="M3 21 9 7" stroke="#56606e"/></svg>
</nav>

<main class="d-flex flex-grow-1" style="min-height:0">
  <aside class="space">
    <div class="tshead">TOOLSPACE</div>
    <div class="tsbar">
      <svg class="ic"><path d="M0 1h7v2H0zM0 4h7v2H0zM0 7h7v2H0zM5 10h5v2H5zM5 13h5v2H5zM11 10h5v2h-5zM11 13h5v2h-5z" fill="#ddd"/><path d="M9 2h4v5M11 5l2 2 2-2" fill="none" stroke="#ddd"/></svg>
      <svg class="ic"><path d="M0 1h2v14H0zM3 1h10v14H3zM14 1h2v3h-2zM14 6h2v5h-2z" fill="#ddd"/><path d="M4 4h8M4 7h8M4 10h8" stroke="#888" stroke-dasharray="2 1"/></svg>
      <svg width="18" height="18"><circle cx="9" cy="9" r="8.500" fill="#d0d0d0"/><text x="9" y="14" text-anchor="middle" font-size="14" font-weight="700" fill="#3b4453">?</text></svg>
    </div>
    <div class="mview"><select aria-label="View"><option>Master View</option></select><svg class="chev" width="9" height="6"><use href="#dn"/></svg></div>
    <div class="treebox">
      <ul class="tree" id="tree"></ul>
      <div class="sb"><svg width="8" height="6"><use href="#sup"/></svg><i style="height:197px;margin-top:46px"></i><svg width="8" height="6" class="mt-auto"><use href="#sdn"/></svg></div>
    </div>
    <div class="tpre"></div>
  </aside>
  <div class="gut"><div></div></div>
  <div class="draw">
    <div class="canvas">
      <svg width="1164" height="765" viewBox="414 113 1164 765" id="plan" aria-label="Profile drawing"></svg>
    </div>
    <div class="cmd">
      <div class="cgrip">
        <svg width="17" height="6"><path d="M0 1h17M0 5h17" stroke="#ddd" stroke-width="2" stroke-dasharray="2 1"/></svg>
        <svg width="9" height="9"><path d="M1 1l7 7M8 1 1 8" stroke="#ddd" stroke-width="2"/></svg>
        <svg width="15" height="15"><path d="M1 14l7-7" stroke="#ddd" stroke-width="3"/><path d="M7 8c-1-4 1-7 5-7l-2 3 1 2 3-1c1 3-3 5-7 3z" fill="#ddd"/></svg>
      </div>
      <div class="flex-grow-1">
        <div class="clog">Done.<br>**** No System Variable Changed ****</div>
        <div class="cin"><svg width="26" height="13"><path d="M.5.500h15v11H.5z" fill="#fff" stroke="#aaa"/><path d="M0 0h16v2H0z" fill="#aaa"/><path d="M2 4l3 2-3 2M6 9h4" stroke="#999" fill="none"/><path d="M18 4h8l-4 4z" fill="#aaa"/></svg><input type="text" placeholder="Type a command" aria-label="Command"></div>
      </div>
    </div>
  </div>
  <aside class="props">
    <div class="vtabs"><button>Extended Data</button><button>Object Class</button></div>
    <div class="pg" id="pg"></div>
  </aside>
</main>

<section class="dlgw lsc" role="dialog" aria-label="Label Style Composer">
  <div class="dtitle"><svg width="15" height="16"><use href="#c3d"/></svg><span>Label Style Composer - A-Comment</span></div>
  <div class="ltabs">
    <button style="width:66px">Information</button><button style="width:47px">General</button><button class="act" style="width:46px">Layout</button><button style="width:79px;margin-left:-1px">Dragged State</button><button style="width:56px">Summary</button>
  </div>
  <div class="lpane">
    <div>
      <label for="comp" class="d-block">Component name:</label>
      <div class="d-flex" style="gap:7px;margin-top:2px">
        <div class="cbx" style="width:378px"><select id="comp"><option>Station</option></select><svg class="chev" width="9" height="6"><use href="#dn"/></svg></div>
        <button class="ib" style="width:35px" aria-label="Create text component"><svg width="33" height="20"><path d="M2 15 7 2l5 13M4 11h6" fill="none" stroke="#666" stroke-width="2"/><path d="M13 9v8M9 13h8" stroke="#12a04a" stroke-width="2"/><path d="M21.500 0v20" stroke="#adadad"/><path d="M23 8h9l-4 5z" fill="#444"/></svg></button>
        <button class="ib" aria-label="Copy component"><svg width="20" height="20"><path d="M3 9 8 2h5v5l-5 6z" fill="#fff" stroke="#777" stroke-width="1.200"/><path d="M6 8l3-2 2 6h-3z" fill="#5fb4ea"/><path d="M10 10h4v5h-4zM14 12h4v5h-5z" fill="#2187d8"/></svg></button>
        <button class="ib" aria-label="Delete component"><svg width="16" height="16"><path d="M2 2l12 12M14 2 2 14" stroke="#f23c3c" stroke-width="3"/></svg></button>
        <button class="ib" aria-label="Draw order"><svg width="18" height="18"><path d="M4 4h10v10H4z" fill="#aaa"/><path d="M1.500 1.500h7v5h-7zM9.500 11.500h7v5h-7z" fill="#fff" stroke="#666"/></svg></button>
      </div>
      <div class="grid">
        <table><colgroup><col style="width:17px"><col style="width:256px"><col></colgroup><thead><tr><th colspan="2">Property</th><th>Value</th></tr></thead><tbody id="grid"></tbody></table>
        <div class="sb ms-auto" style="width:16px"><svg width="8" height="6"><use href="#sup"/></svg><i style="height:156px"></i><svg width="8" height="6" class="mt-auto"><use href="#sdn"/></svg></div>
      </div>
    </div>
    <div style="margin-top:4px">
      <div class="pvh">Preview</div>
      <div class="pv"><svg width="508" height="320" viewBox="932 203 508 320"><path d="M1041 255l178 140M1052 392l80-107M1219 409l74 97M1170 335l49 74M1236 436l-80 60" stroke="#fff" fill="none" stroke-width="1"/><text transform="translate(1216 462) rotate(-42)" font-size="9" font-weight="700" fill="#fff">67.74</text></svg></div>
    </div>
  </div>
  <div class="lfoot"><button class="b3">OK</button><button class="b3">Cancel</button><button class="b3">Apply</button><button class="b3">Help</button></div>
  <svg class="grip" width="12" height="12"><use href="#rs"/></svg>
</section>

<section class="dlgw tce" role="dialog" aria-label="Text Component Editor">
  <div class="dtitle"><svg width="15" height="16"><use href="#c3d"/></svg><span>Text Component Editor - Contents</span><button aria-label="Close"><svg width="12" height="12"><path d="M1 1l10 10M11 1 1 11" stroke="#111" stroke-width="1.200"/></svg></button></div>
  <div class="ftabs"><button>Format</button><button class="act">Properties</button></div>
  <div class="d-flex">
    <div class="fpane">
      <label for="prop" class="d-block">Properties:</label>
      <div class="d-flex" style="gap:7px;margin-top:1px">
        <div class="cbx" style="width:300px"><select id="prop"><option>Station Value</option></select><svg class="chev" width="9" height="6"><use href="#dn"/></svg></div>
        <button class="ib" aria-label="Insert"><svg width="18" height="16"><path d="M1.500 5.500h8V1.500l7 6.500-7 6.500v-4h-8z" fill="#fff" stroke="#666" stroke-width="1.200"/></svg></button>
      </div>
      <div class="ftab"><div class="rl"></div><div class="sb"><svg width="8" height="6"><use href="#sup"/></svg><i style="height:68px"></i><svg width="8" height="6" class="mt-auto"><use href="#sdn"/></svg></div></div>
      <ul class="drop"><li>Station Value</li><li>Raw Station</li><li>Station Equation ID</li><li>Northing</li><li>Easting</li><li>Design Speed Before</li><li>Design Speed</li><li>Instantaneous Direction</li><li>Perpendicular Direction</li><li>Alignment Name</li><li>Alignment Description</li><li>Alignment Length</li><li>Alignment Start Station</li><li>Alignment End Station</li></ul>
    </div>
    <div class="ed">
      <textarea aria-label="Text" spellcheck="false">&lt;[Station Value(Um|FD|P2|RN|AP|GC|UN|Sn|OF)]&gt;</textarea>
      <div class="stat"><div>Ln 1 Col 1</div><div>AutoCAPS</div></div>
    </div>
  </div>
  <div class="ffoot"><button class="b3 imp">Import Text...</button><button class="b3 ok">OK</button><button class="b3">Cancel</button><button class="b3">Help</button></div>
  <svg class="grip" width="12" height="12"><use href="#rs"/></svg>
</section>

<svg class="ann" width="1480" height="480" aria-hidden="true" fill="none" stroke="#ed1c24" stroke-width="3" stroke-linecap="round" stroke-linejoin="round">
  <path d="M91 191C70 187 40 183 22 188 8 194 10 202 20 212 30 216 60 214 80 218 95 218 112 217 117 213 121 203 119 200 99 196"/>
  <path d="M100 414C80 412 68 418 66 427 64 440 66 451 78 451 110 453 150 455 190 458 205 458 217 452 218 444 220 434 217 431 205 426 185 420 150 415 131 415"/>
  <path d="M1073 160C1080 152 1100 146 1115 141 1135 135 1150 131 1170 131 1190 131 1200 136 1228 137L1257 138C1285 138 1300 132 1338 132 1365 132 1385 135 1390 138 1404 148 1414 165 1422 190 1426 210 1436 238 1443 263 1450 285 1457 305 1456 325 1455 350 1453 370 1425 387 1405 394 1370 397 1306 400H1231C1200 397 1170 396 1149 393 1120 387 1105 370 1091 340 1080 305 1068 260 1063 230 1060 205 1060 170 1073 160"/>
</svg>
<p class="note">Comment is not an<br>option :(</p>

<script>
/* settings tree: [depth, icon, label, expander] */
const nodes=[[1,'aln','Alignment','-'],[2,'fold','Alignment Styles','+'],[2,'fold','Design Checks','+'],[2,'fold','Label Styles','-'],[3,'fold','Label Sets','+'],[3,'fold','Station','-'],[4,'fold','Major Station','+'],[4,'fold','Minor Station','+'],[4,'fold','Geometry Point','+'],[4,'fold','Profile Geometry Point','+'],[4,'fold','Station Equation','+'],[4,'fold','Design Speed','-'],[5,'tag','A-Comment','s'],[5,'tag','Standard','f'],[5,'tag','Station over Speed',''],[5,'expr','Expressions','e'],[4,'fold','Superelevation Critical Points','+'],[4,'fold','Cant Critical Points','+'],[3,'fold','Station Offset','+'],[3,'fold','Line','+'],[3,'fold','Curve','+'],[3,'fold','Spiral','+'],[3,'fold','Tangent Intersection','+'],[3,'fold','Point of Intersection','+'],[3,'fold','Cant Information','+'],[2,'fold','Table Styles','+'],[2,'fold','Commands','+']];
const flag='<svg width="19" height="16"><path d="M2.500 1.500h6l-6 6z" fill="#e39a1a"/></svg>';
document.getElementById('tree').innerHTML=nodes.map(([d,ic,t,k])=>{
  const ex=k==='+'||k==='-';
  let g='<span class="gd"></span>'.repeat(d);
  g+=`<span class="gd hz${k==='e'?' nd':''}">${ex?`<button class="${k==='+'?'pl':''}" aria-label="Toggle ${t}"></button>`:''}</span>`;
  return `<li>${g}<svg class="ic ti"><use href="#${ic}"/></svg>${k==='s'||k==='f'?flag:''}<span class="${k==='s'?'sel':'tx'}">${t}</span></li>`;
}).join('');

/* label component properties */
const rows=[['General'],['Name','Station'],['Visibility','True'],['Anchor Component','Line'],['Anchor Point','Start'],['Text'],['Contents','{\\fArial|b0|i0|c0|p2;&lt;[Station Value(U...'],['Text Height','3.00mm'],['Rotation Angle','000.0000 (d)'],['Attachment','Bottom left'],['X Offset','6.00mm'],['Y Offset','0.75mm'],['Allow Curved Text','False'],['Color','BYLAYER'],['Lineweight','ByLayer']];
document.getElementById('grid').innerHTML=rows.map(([n,v])=>{
  if(!v)return `<tr class="cat"><td class="gt"><i class="ebox"></i></td><td class="nm">${n}</td><td class="vl"></td></tr>`;
  if(n==='Color')return `<tr><td class="gt"></td><td class="nm" style="padding-left:4px"><i class="sw" style="margin-right:3px"></i>${n}</td><td class="vl" style="padding-left:2px"><i class="sw" style="margin-right:9px"></i>${v}</td></tr>`;
  const c=n==='Contents'?'cur':n==='Allow Curved Text'?'off':'';
  return `<tr class="${c}"><td class="gt"></td><td class="nm">${n}</td><td class="vl"><div>${v}${c==='cur'?'<i class="dotb"></i>':''}</div></td></tr>`;
}).join('');

/* properties palette */
const groups=[['',[['Plot style','ByColor','d'],['Plot style table','A3CO.ctb','w'],['Plot table attache...','Model','d'],['Plot table type','Color dependent','d']]],['View',[['Center X','422093.9923','d'],['Center Y','768225.5047','d'],['Center Z','0.0000','d'],['Height','152.3428','d'],['Width','233.1246','d']]],['Misc',[['Annotation scale','1:500','w'],['UCS icon On','Yes','w'],['UCS icon at origin','Yes','w'],['UCS per viewport','Yes','w'],['UCS Name','','w'],['Visual Style','2D Wireframe','w']]]];
document.getElementById('pg').innerHTML=groups.map(([h,r])=>(h?`<h2>${h}</h2>`:'')+'<table>'+r.map(([a,b,c])=>`<tr><td>${a}</td><td class="${c}">${b}</td></tr>`).join('')+'</table>').join('');

/* profile band and UCS marker */
const X=s=>460.5+(s-80)*4.988;
let o='<g fill="none" stroke-width="1.500">';
const up=(x,y,t)=>`<text transform="translate(${x} ${y}) rotate(-90)" font-size="10" fill="#fff">${t}</text>`;
let lab=up(1346,654,'257.79');
for(let s=80;s<=250;s+=10){const x=X(s);
  o+=`<path d="M${x} 614V664" stroke="#c800c8"/>`;
  lab+=up(x-2,s<100?652:655,s+'.00');
  if(s>=120&&s<=190){o+=`<path d="M${x} 580V614" stroke="#cfcfcf"/>`;lab+=up(x-2,603,s+'.00');}
}
o+='<path d="M414 614H1348M414 664.500H1348M1347.500 580V664" stroke="#f0f"/><path d="M414 590H665M704 590h12M752 590h18M1193 590H1348M1012 590H1164" stroke="#ddd"/>';
[797,847,898,948].forEach(x=>{o+=`<path d="M${x+2} 590h22" stroke="#ddd"/>`});
o+='</g><g font-size="12" fill="#d8d8d8"><text x="667" y="594">Ripple</text><text x="717" y="595">Ruffle</text>';
[772,822,873,923,973,1167].forEach(x=>{o+=`<text x="${x}" y="594">Test</text>`});
o+='</g><text x="621" y="652" font-size="17" fill="#0f0">SECTION STREAM 1</text>'+lab;
o+='<path d="M433.500 808v50M433.500 858.500H484M429.500 853.500h9v9h-9z" fill="none" stroke="#fff"/><text x="435" y="804" font-size="18" fill="#fff">Y</text><text x="488" y="857" font-size="18" fill="#fff">X</text>';
document.getElementById('plan').innerHTML=o;
</script>
<script src="https://cdn.jsdelivr.net/npm/bootstrap@5.3.0/dist/js/bootstrap.bundle.min.js"></script>
</body>
</html>
